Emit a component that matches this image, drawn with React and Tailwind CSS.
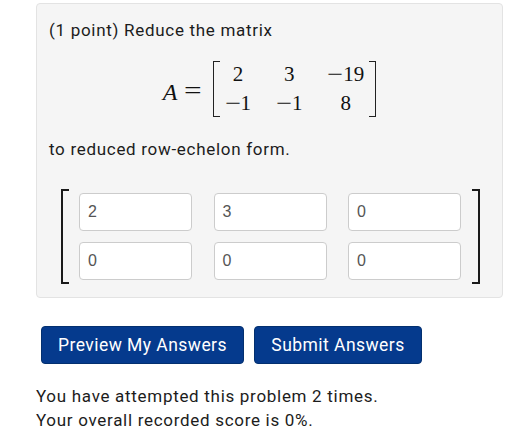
import React from "react";

function Cell({ v }) {
  return (
    <div className="w-[113px] h-[38px] bg-white border border-[#cccccc] rounded-[4px] flex items-center pl-[8px] text-[16px] text-[#555555] [font-family:'Liberation_Sans',Arial,sans-serif]">
      {v}
    </div>
  );
}

function Num({ s }) {
  if (s.startsWith("−")) {
    return (
      <span>
        <span className="inline-block scale-x-[1.35] mr-[2px] ml-[2px]">−</span>
        {s.slice(1)}
      </span>
    );
  }
  return <span>{s}</span>;
}

export default function App() {
  const m = [
    ["2", "3", "−19"],
    ["−1", "−1", "8"],
  ];
  const ans = ["2", "3", "0", "0", "0", "0"];
  return (
    <div className="w-[524px] h-[432px] bg-white overflow-hidden [font-family:Roboto,'Noto_Sans',sans-serif] text-[#1c1c1c]">
      <div className="mt-[3px] ml-[36px] w-[467px] h-[295px] bg-[#f5f5f5] border border-[#e3e3e3] rounded-[4px] pt-[14px] px-[12px]">
        <p className="text-[17px] leading-[24px] tracking-[0.7px]">(1 point) Reduce the matrix</p>
        <div className="mt-[18px] flex items-center justify-center [font-family:'Liberation_Serif','Times_New_Roman',serif] text-[21px] text-[#111]">
          <span className="italic leading-[29px] text-[24px] w-[17px] mr-[5px] relative top-[3px]">A</span>
          <span className="leading-[29px] text-[24px] w-[17px] mr-[11px] text-center relative top-[1px]">
            <span className="inline-block scale-x-[1.3]">=</span>
          </span>
          <div className="w-[7px] h-[56px] border-l-[1.5px] border-t-[1.5px] border-b-[1.5px] border-[#222]" />
          <div className="grid grid-cols-[auto_auto_auto] gap-x-[25px] px-[5px] leading-[29px] text-center">
            {m.flat().map((x, i) => (
              <Num key={i} s={x} />
            ))}
          </div>
          <div className="w-[7px] h-[56px] border-r-[1.5px] border-t-[1.5px] border-b-[1.5px] border-[#222]" />
        </div>
        <p className="mt-[19px] text-[17px] leading-[24px] tracking-[0.7px]">to reduced row-echelon form.</p>
        <div className="mt-[28px] ml-[12px] flex items-center">
          <div className="w-[8px] h-[95px] border-l-2 border-t-2 border-b-2 border-[#1a1a1a]" />
          <div className="ml-[10px] grid grid-cols-[113px_113px_113px] gap-x-[21.5px] gap-y-[11px]">
            {ans.map((v, i) => (
              <Cell key={i} v={v} />
            ))}
          </div>
          <div className="ml-[11px] w-[8px] h-[95px] border-r-2 border-t-2 border-b-2 border-[#1a1a1a]" />
        </div>
      </div>
      <div className="mt-[28px] ml-[41px] flex gap-[10px]">
        <button className="w-[203px] h-[38px] rounded-[4px] bg-[#053a8d] border border-[#03306f] text-white text-[17.5px] tracking-[0.45px] flex items-center justify-center">
          Preview My Answers
        </button>
        <button className="w-[168px] h-[38px] rounded-[4px] bg-[#053a8d] border border-[#03306f] text-white text-[17.5px] tracking-[0.45px] flex items-center justify-center">
          Submit Answers
        </button>
      </div>
      <div className="mt-[20px] ml-[36px] text-[17px] leading-[24.3px] tracking-[0.7px] text-[#1c1c1c]">
        <p>You have attempted this problem 2 times.</p>
        <p>Your overall recorded score is 0%.</p>
      </div>
    </div>
  );
}
